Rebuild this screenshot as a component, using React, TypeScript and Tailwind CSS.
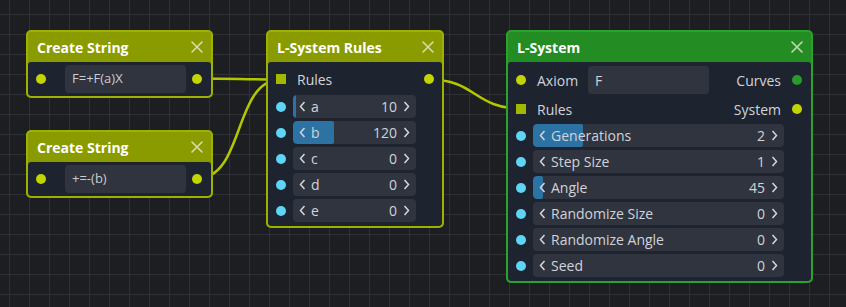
import React from 'react';

const FONT = { fontFamily: '"Open Sans", "Noto Sans", sans-serif' };

type Theme = 'olive' | 'green';

function CloseIcon() {
  return (
    <svg width="12" height="12" viewBox="0 0 12 12" className="shrink-0">
      <path d="M1 1 L11 11 M11 1 L1 11" stroke="#e4e8c8" strokeOpacity="0.85" strokeWidth="1.6" strokeLinecap="round" />
    </svg>
  );
}

function Chevron({ dir }: { dir: 'left' | 'right' }) {
  return (
    <svg width="7" height="11" viewBox="0 0 7 11" className="shrink-0">
      <path
        d={dir === 'left' ? 'M5.5 1 L1.5 5.5 L5.5 10' : 'M1.5 1 L5.5 5.5 L1.5 10'}
        fill="none"
        stroke="#d4d7de"
        strokeWidth="1.5"
      />
    </svg>
  );
}

function Dot({ color }: { color: 'yellow' | 'blue' | 'green' }) {
  const cls =
    color === 'yellow' ? 'bg-[#c2d500]' : color === 'blue' ? 'bg-[#5ed5f5]' : 'bg-[#2a9a2c]';
  return <div className={`w-[10px] h-[10px] rounded-full shrink-0 ${cls}`} />;
}

function Square() {
  return <div className="w-[10px] h-[10px] shrink-0 bg-[#a3b900]" />;
}

function Node({
  title,
  theme,
  left,
  top,
  width,
  children,
}: {
  title: string;
  theme: Theme;
  left: number;
  top: number;
  width: number;
  children: React.ReactNode;
}) {
  const outer =
    theme === 'olive'
      ? 'border-[#9db200] bg-[#8a9b00]'
      : 'border-[#2ba22b] bg-[#238c23]';
  return (
    <div
      className={`absolute rounded-[5px] border-2 overflow-hidden ${outer}`}
      style={{ left, top, width }}
    >
      <div className="h-[30px] flex items-center justify-between pl-[9px] pr-[8px]">
        <span className="text-[14px] font-bold text-white">{title}</span>
        <CloseIcon />
      </div>
      <div className="bg-[#1e2330] rounded-[3px]">{children}</div>
    </div>
  );
}

function Slider({ label, value, fill, width }: { label: string; value: string; fill: number; width: number }) {
  return (
    <div className="flex items-center h-[23px] pl-[8px]">
      <Dot color="blue" />
      <div
        className="ml-[7px] relative h-[23px] rounded-[4px] bg-[#30343f] overflow-hidden flex items-center"
        style={{ width }}
      >
        {fill > 0 && (
          <div className="absolute left-0 top-0 bottom-0 bg-[#2c72a2] rounded-l-[4px] rounded-r-[2px]" style={{ width: fill }} />
        )}
        <div className="relative flex items-center w-full pl-[6px] pr-[6px] text-[14px] text-[#d0d3da]">
          <Chevron dir="left" />
          <span className="ml-[5px] leading-none">{label}</span>
          <span className="ml-auto leading-none">{value}</span>
          <span className="ml-[6px]">
            <Chevron dir="right" />
          </span>
        </div>
      </div>
    </div>
  );
}

function CreateString({ top, text }: { top: number; text: string }) {
  return (
    <Node title="Create String" theme="olive" left={26} top={top} width={187}>
      <div className="flex items-center py-[3px] pl-[8px] pr-[9px]">
        <Dot color="yellow" />
        <div className="ml-[19px] w-[121px] h-[28px] rounded-[4px] bg-[#30343f] flex items-center pl-[7px] text-[13px] text-[#c9ccd2]">
          {text}
        </div>
        <div className="ml-auto">
          <Dot color="yellow" />
        </div>
      </div>
    </Node>
  );
}

export default function App() {
  const W = 846;
  const H = 307;
  return (
    <div className="relative w-[846px] h-[307px] overflow-hidden bg-[#1d1e22]" style={FONT}>
      {/* grid + wires */}
      <svg className="absolute inset-0" width={W} height={H}>
        <defs>
          <pattern id="grid" x="9" y="14" width="20" height="20" patternUnits="userSpaceOnUse">
            <path d="M0.5 0 V20 M0 0.5 H20" stroke="#303136" strokeWidth="1" fill="none" />
          </pattern>
        </defs>
        <rect width={W} height={H} fill="url(#grid)" />
        <g stroke="#b3c700" strokeWidth="2.5" fill="none">
          <path d="M197 78.5 C 239 78.5, 239 79.5, 281 79.5" />
          <path d="M197 178.5 C 245 178.5, 233 79.5, 281 79.5" />
          <path d="M429 79.5 C 476 79.5, 474 108.5, 521 108.5" />
        </g>
      </svg>

      <CreateString top={30} text="F=+F(a)X" />
      <CreateString top={130} text="+=-(b)" />

      <Node title="L-System Rules" theme="olive" left={266} top={30} width={178}>
        <div className="flex flex-col gap-[3px] pt-[4px] pb-[4px]">
          <div className="flex items-center h-[26px] pl-[8px] pr-[8px]">
            <Square />
            <span className="ml-[11px] text-[14px] text-[#d0d3da]">Rules</span>
            <div className="ml-auto">
              <Dot color="yellow" />
            </div>
          </div>
          <Slider label="a" value="10" fill={3} width={123} />
          <Slider label="b" value="120" fill={41} width={123} />
          <Slider label="c" value="0" fill={0} width={123} />
          <Slider label="d" value="0" fill={0} width={123} />
          <Slider label="e" value="0" fill={0} width={123} />
        </div>
      </Node>

      <Node title="L-System" theme="green" left={506} top={30} width={307}>
        <div className="flex flex-col gap-[3px] pt-[4px] pb-[4px]">
          <div className="flex items-center h-[28px] pl-[8px] pr-[9px]">
            <Dot color="yellow" />
            <span className="ml-[11px] text-[14px] text-[#d0d3da]">Axiom</span>
            <div className="ml-[10px] w-[121px] h-[28px] rounded-[4px] bg-[#30343f] flex items-center pl-[7px] text-[14px] text-[#d0d3da]">
              F
            </div>
            <span className="ml-auto text-[14px] text-[#d0d3da]">Curves</span>
            <div className="ml-[11px]">
              <Dot color="green" />
            </div>
          </div>
          <div className="flex items-center h-[24px] pl-[8px] pr-[9px]">
            <Square />
            <span className="ml-[11px] text-[14px] text-[#d0d3da]">Rules</span>
            <span className="ml-auto text-[14px] text-[#d0d3da]">System</span>
            <div className="ml-[11px]">
              <Dot color="yellow" />
            </div>
          </div>
          <Slider label="Generations" value="2" fill={50} width={251} />
          <Slider label="Step Size" value="1" fill={0} width={251} />
          <Slider label="Angle" value="45" fill={10} width={251} />
          <Slider label="Randomize Size" value="0" fill={0} width={251} />
          <Slider label="Randomize Angle" value="0" fill={0} width={251} />
          <Slider label="Seed" value="0" fill={0} width={251} />
        </div>
      </Node>
    </div>
  );
}
